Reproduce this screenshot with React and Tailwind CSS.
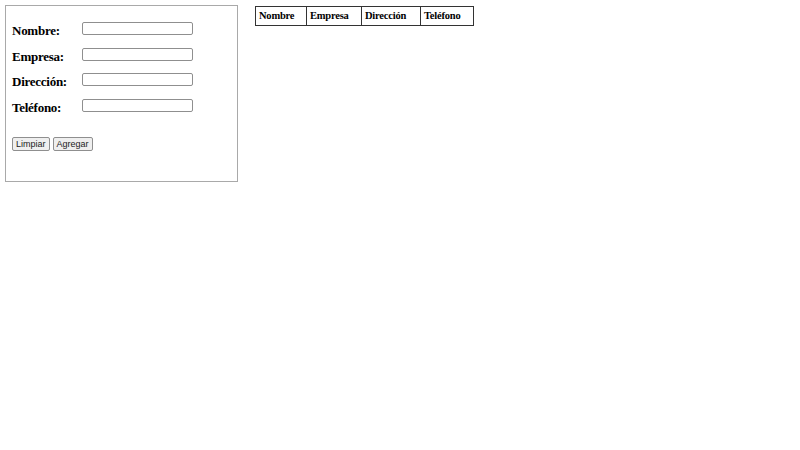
export default function App() {
  const fields = ["Nombre:", "Empresa:", "Dirección:", "Teléfono:"];
  const cols = [
    { name: "Nombre", w: "w-[51px]" },
    { name: "Empresa", w: "w-[55px]" },
    { name: "Dirección", w: "w-[59px]" },
    { name: "Teléfono", w: "w-[53px]" },
  ];

  return (
    <div className="flex items-start gap-[17px] p-[5px] bg-white text-black font-['Liberation_Serif',serif]">
      {/* form panel */}
      <div className="w-[233px] h-[177px] border border-[#a9a9a9] pl-[6px] pt-[10px]">
        <div className="flex flex-col">
          {fields.map((f) => (
            <div key={f} className="flex items-center h-[25.5px]">
              <span className="w-[70px] text-[13px] tracking-[-0.02em] font-bold leading-none pt-[4px]">{f}</span>
              <input
                type="text"
                className="w-[111px] h-[13px] border border-[#8f8f8f] rounded-[2px] bg-white"
              />
            </div>
          ))}
        </div>
        <div className="flex gap-[3px] mt-[19px] font-['Liberation_Sans',sans-serif] text-[9px]">
          <button className="h-[14px] px-[3px] leading-none border border-[#8f8f8f] rounded-[2px] bg-[#efefef] text-[#222]">
            Limpiar
          </button>
          <button className="h-[14px] px-[3px] leading-none border border-[#8f8f8f] rounded-[2px] bg-[#efefef] text-[#222]">
            Agregar
          </button>
        </div>
      </div>

      {/* table */}
      <table className="mt-[1px] border-collapse text-[10.5px] tracking-[-0.02em]">
        <thead>
          <tr>
            {cols.map((c) => (
              <th
                key={c.name}
                className={`${c.w} h-[19px] border border-[#333] px-[3px] text-left font-bold leading-none`}
              >
                {c.name}
              </th>
            ))}
          </tr>
        </thead>
      </table>
    </div>
  );
}
